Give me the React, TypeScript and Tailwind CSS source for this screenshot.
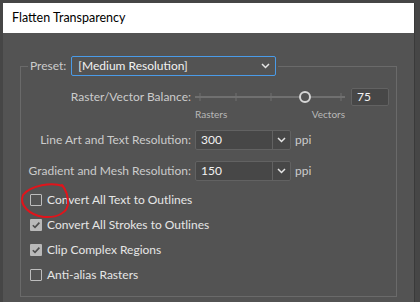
import React from 'react';

const Chevron: React.FC<{ className?: string }> = ({ className }) => (
  <svg width="9" height="6" viewBox="0 0 9 6" className={className}>
    <path d="M1 1 L4.5 4.5 L8 1" fill="none" stroke="#e6e6e6" strokeWidth="1.5" />
  </svg>
);

const Combo: React.FC<{ value: string }> = ({ value }) => (
  <div className="flex h-[20px] w-[96px] rounded-[2px] border border-[#626262] bg-[#474747]">
    <div className="flex flex-1 items-center pl-[5px] text-[12px] text-[#f2f2f2]">{value}</div>
    <div className="flex w-[18px] items-center justify-center border-l border-[#626262]">
      <Chevron />
    </div>
  </div>
);

const Check: React.FC<{ checked?: boolean; label: string }> = ({ checked, label }) => (
  <div className="flex h-[25px] items-center pl-[9px]">
    {checked ? (
      <div className="flex h-[12px] w-[12px] items-center justify-center rounded-[1px] bg-[#b9b9b9]">
        <svg width="10" height="10" viewBox="0 0 10 10">
          <path d="M1.8 5.2 L4 7.4 L8.4 2.6" fill="none" stroke="#4d4d4d" strokeWidth="1.6" />
        </svg>
      </div>
    ) : (
      <div className="h-[12px] w-[12px] rounded-[1px] border border-[#bdbdbd]" />
    )}
    <span className="ml-[5px] whitespace-nowrap text-[12px] text-[#e6e6e6]">{label}</span>
  </div>
);

export default function App() {
  return (
    <div
      className="relative flex h-[302px] w-[420px] overflow-hidden bg-[#464646] pl-[3px] pr-[5px] pt-[3px]"
      style={{ fontFamily: 'Lato, "Noto Sans", sans-serif' }}
    >
      <div className="flex flex-1 flex-col border-r border-[#3a3a3a]">
        {/* Title bar */}
        <div className="flex h-[30px] shrink-0 items-center bg-white pl-[9px] text-[12.5px] text-black">
          Flatten Transparency
        </div>

        {/* Body */}
        <div className="flex flex-1 flex-col bg-[#535353] px-[17px]">
          <fieldset className="mt-[23px] border border-[#6a6a6a] pb-[9px]">
            <legend className="ml-[7px] flex h-[20px] items-center px-[2px]">
              <span className="text-[12px] text-[#cccccc]">Preset:</span>
              <div className="ml-[5px] flex h-[20px] w-[205px] items-center justify-between rounded-[2px] border border-[#4a9be8] pl-[6px] pr-[5px]">
                <span className="text-[12px] text-[#f2f2f2]">[Medium Resolution]</span>
                <Chevron />
              </div>
            </legend>

            {/* Raster/Vector Balance */}
            <div className="mt-[12px] flex h-[18px] items-center">
              <div className="w-[170px] whitespace-nowrap text-right text-[12px] text-[#cccccc]">Raster/Vector Balance:</div>
              <svg width="152" height="14" viewBox="0 0 152 14" className="ml-[4px]">
                <line x1="0" y1="7" x2="150" y2="7" stroke="#707070" strokeWidth="2" />
                <line x1="5" y1="3" x2="5" y2="11" stroke="#707070" strokeWidth="1" />
                <line x1="41" y1="3" x2="41" y2="11" stroke="#707070" strokeWidth="1" />
                <line x1="76" y1="3" x2="76" y2="11" stroke="#707070" strokeWidth="1" />
                <line x1="146" y1="3" x2="146" y2="11" stroke="#707070" strokeWidth="1" />
                <circle cx="110" cy="7" r="5" fill="#535353" stroke="#d6d6d6" strokeWidth="2" />
              </svg>
              <div className="ml-[4px] flex h-[18px] w-[38px] items-center rounded-[2px] border border-[#626262] bg-[#474747] pl-[5px] text-[12px] text-[#f2f2f2]">
                75
              </div>
            </div>
            <div className="ml-[174px] mt-[2px] flex h-[12px] w-[150px] items-center justify-between text-[10px] text-[#b8b8b8]">
              <span>Rasters</span>
              <span>Vectors</span>
            </div>

            {/* Resolutions */}
            <div className="mt-[10px] flex h-[20px] items-center">
              <div className="w-[170px] whitespace-nowrap text-right text-[12px] text-[#cccccc]">Line Art and Text Resolution:</div>
              <div className="ml-[4px]">
                <Combo value="300" />
              </div>
              <span className="ml-[4px] text-[12px] text-[#cccccc]">ppi</span>
            </div>
            <div className="mt-[11px] flex h-[20px] items-center">
              <div className="w-[170px] whitespace-nowrap text-right text-[12px] text-[#cccccc]">Gradient and Mesh Resolution:</div>
              <div className="ml-[4px]">
                <Combo value="150" />
              </div>
              <span className="ml-[4px] text-[12px] text-[#cccccc]">ppi</span>
            </div>

            {/* Options */}
            <div className="mt-[6px] flex flex-col">
              <Check label="Convert All Text to Outlines" />
              <Check checked label="Convert All Strokes to Outlines" />
              <Check checked label="Clip Complex Regions" />
              <Check label="Anti-alias Rasters" />
            </div>
          </fieldset>
        </div>
      </div>

      {/* Red annotation circle */}
      <svg className="pointer-events-none absolute left-0 top-0" width="420" height="302" viewBox="0 0 420 302">
        <path
          d="M63 186 C52 182 31 185 23 195 C19 205 29 215 44 217 C58 218 68 212 68 203 C68 196 67 191 62 185"
          fill="none"
          stroke="#e0141b"
          strokeWidth="2"
          strokeLinecap="round"
        />
      </svg>
    </div>
  );
}
